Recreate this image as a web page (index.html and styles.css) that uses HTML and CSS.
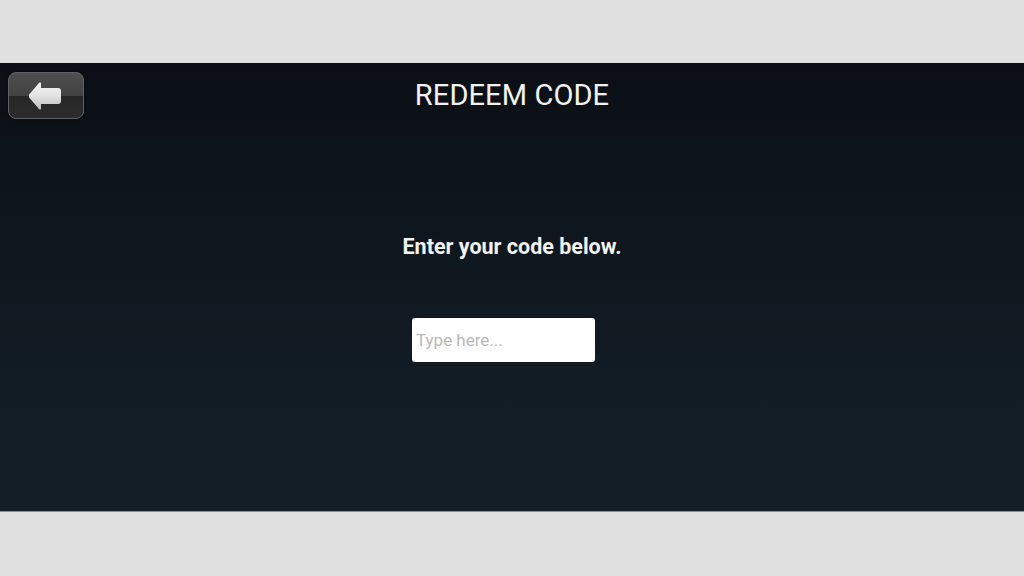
FILE: index.html
```html
<!DOCTYPE html>
<html>
<head>
<meta charset="utf-8">
<link rel="stylesheet" href="styles.css">
</head>
<body>
<div class="frame">
  <div class="screen">
    <header class="topbar">
      <button class="back" aria-label="Back">
        <svg width="38" height="34" viewBox="0 0 38 34">
          <defs>
            <linearGradient id="ag" x1="0" y1="0" x2="0" y2="1">
              <stop offset="0" stop-color="#f4f4f4"/>
              <stop offset="0.5" stop-color="#e2e2e2"/>
              <stop offset="1" stop-color="#bdbdbd"/>
            </linearGradient>
          </defs>
          <path d="M2 17 Q1.5 16 2.5 15 L12 4 Q14 2 14 5 L14 9 L31 9 Q34 9 34 12 L34 22 Q34 25 31 25 L14 25 L14 29 Q14 32 12 30 L2.5 19 Q1.5 18 2 17 Z" fill="url(#ag)"/>
        </svg>
      </button>
      <h1 class="title">REDEEM CODE</h1>
      <div class="spacer"></div>
    </header>
    <main class="content">
      <p class="prompt">Enter your code below.</p>
      <input class="code" type="text" placeholder="Type here...">
    </main>
  </div>
</div>
</body>
</html>
```

FILE: styles.css
```css
html, body {
  margin: 0;
  padding: 0;
}
body {
  background: #e0e0e0;
  width: 1024px;
  height: 576px;
  overflow: hidden;
  font-family: Roboto, "Liberation Sans", sans-serif;
}
.frame {
  padding-top: 63px;
}
.screen {
  height: 449px;
  background: linear-gradient(180deg, #0b0f15 0%, #0e151c 30%, #121c24 70%, #131e26 100%);
  border-bottom: 1px solid #8a9299;
  box-sizing: border-box;
  display: flex;
  flex-direction: column;
}
.topbar {
  display: grid;
  grid-template-columns: 1fr auto 1fr;
  align-items: start;
  padding: 9px 8px 0 8px;
}
.back {
  width: 76px;
  height: 47px;
  padding: 0;
  border-radius: 8px;
  border: 1px solid #626262;
  background: linear-gradient(180deg, #4f4f4f 0%, #424242 50%, #272727 50%, #2c2c2c 100%);
  box-shadow: 0 0 2px rgba(0,0,0,0.6);
  display: flex;
  align-items: center;
  justify-content: center;
  justify-self: start;
}
.back svg {
  display: block;
}
.title {
  margin: 0;
  padding-top: 6px;
  color: #f2f2f2;
  font-weight: 400;
  font-size: 29px;
  line-height: 34px;
  letter-spacing: 0.1px;
}
.content {
  display: flex;
  flex-direction: column;
  align-items: center;
  padding-top: 115px;
}
.prompt {
  margin: 0;
  color: #f2f2f2;
  font-weight: 700;
  font-size: 21.5px;
  line-height: 26px;
}
.code {
  margin-top: 58px;
  margin-left: -17px;
  width: 183px;
  height: 44px;
  box-sizing: border-box;
  border: none;
  border-radius: 3px;
  background: #ffffff;
  padding: 0 4px;
  font-family: Roboto, "Liberation Sans", sans-serif;
  font-size: 17px;
  color: #333;
  outline: none;
}
.code::placeholder {
  color: #b9b9b9;
}
```
